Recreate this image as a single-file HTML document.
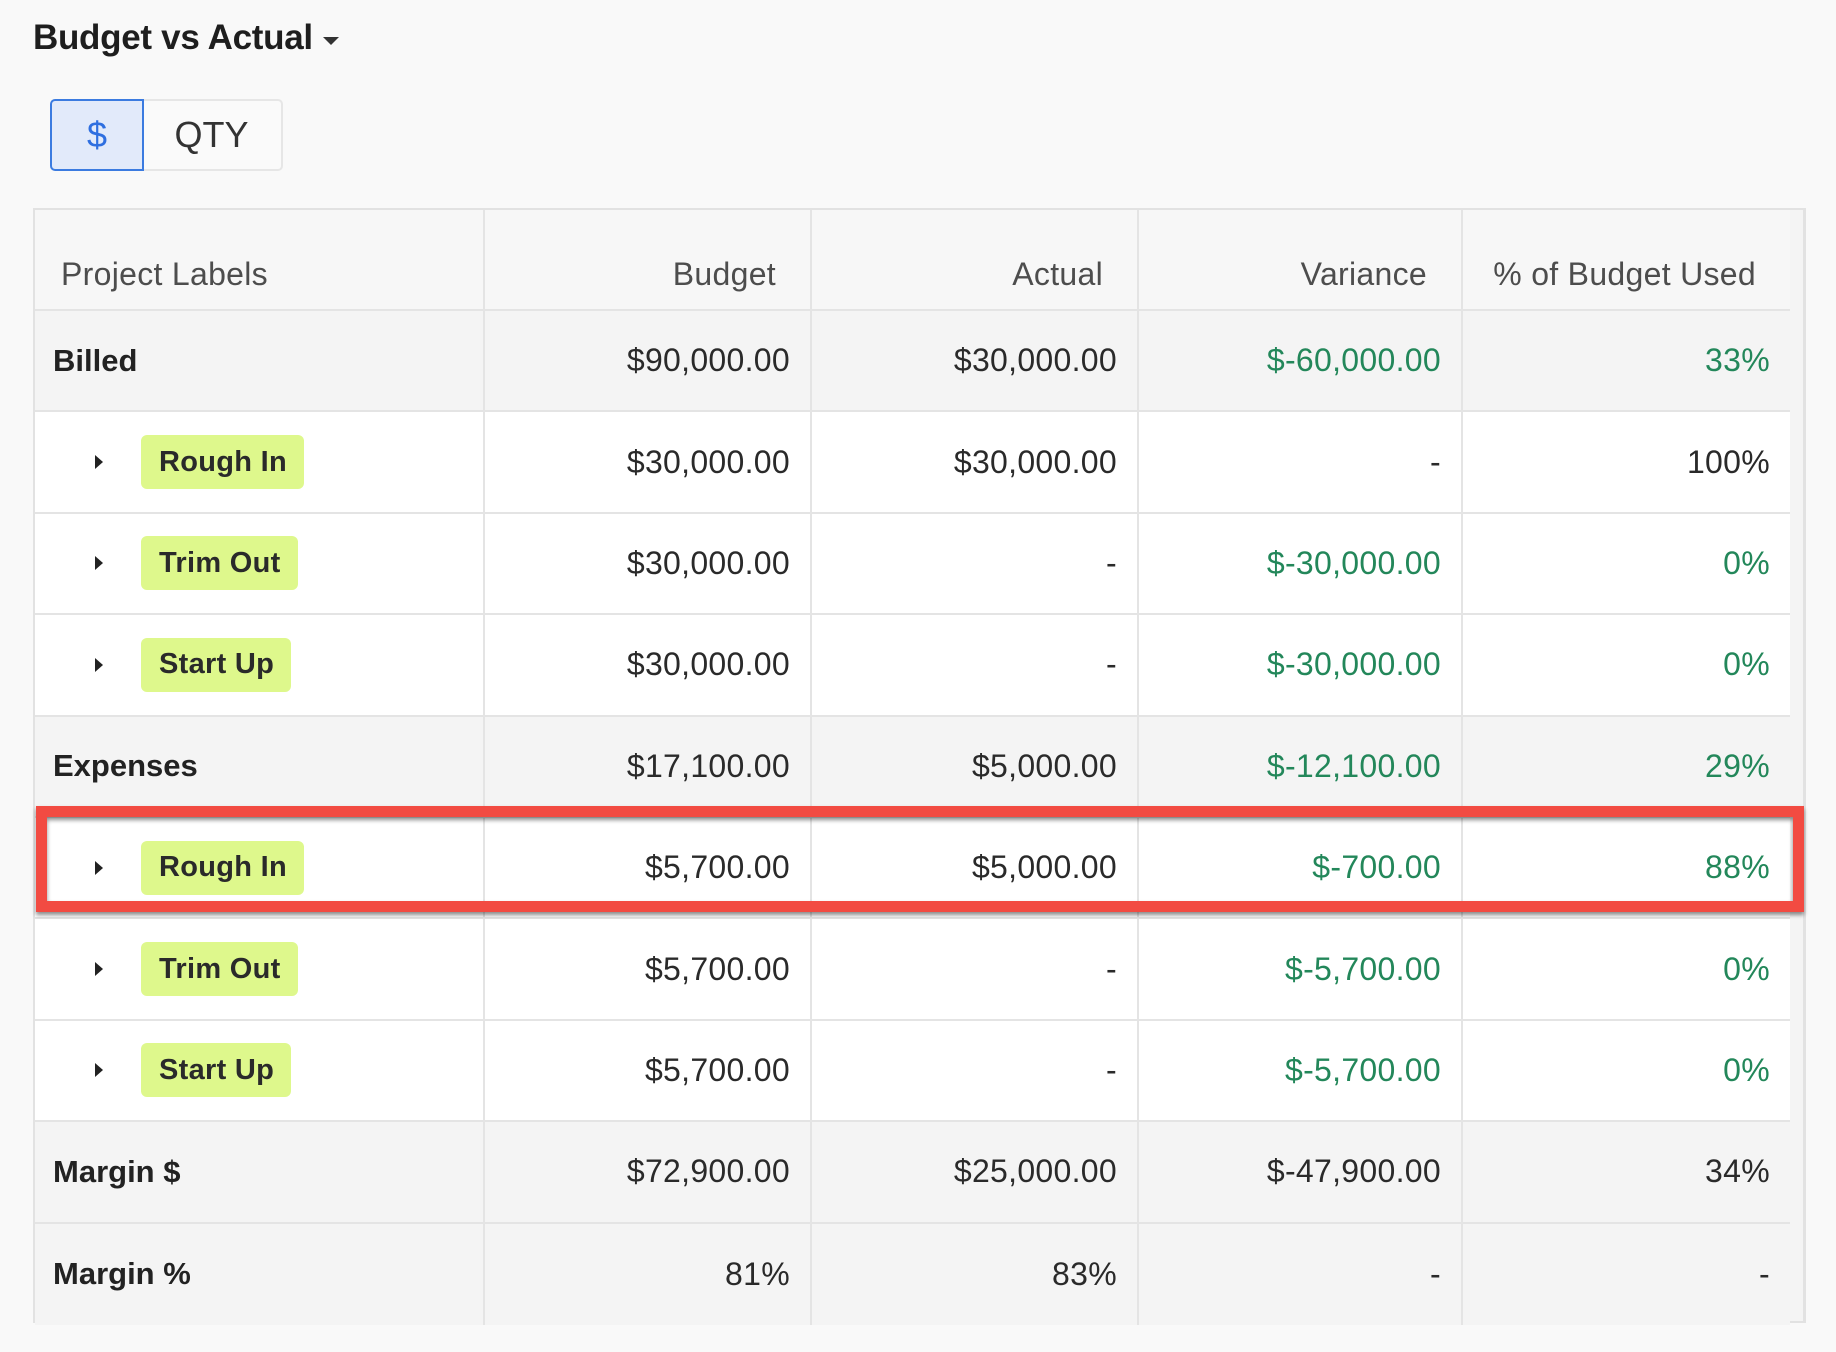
<!DOCTYPE html>
<html><head><meta charset="utf-8"><style>
*{box-sizing:border-box;margin:0;padding:0}
body{width:1836px;height:1352px;background:#f9f9f9;font-family:"Liberation Sans",sans-serif;position:relative;overflow:hidden;color:#2a2a2a}
.title{position:absolute;left:33px;top:18px;font-size:35px;font-weight:bold;color:#1e1e1e;letter-spacing:-0.3px}
.caret{position:absolute;left:323px;top:37px;width:0;height:0;border-left:8px solid transparent;border-right:8px solid transparent;border-top:8px solid #333}
.tg{position:absolute;top:99px;height:72px;display:flex;align-items:center;justify-content:center;font-size:36px}
.t1{left:50px;width:94px;background:#e2eafa;border:2px solid #3b7be0;border-radius:5px 0 0 5px;color:#2f6fe0;z-index:2}
.t2{left:142px;width:141px;background:#fafafa;border:2px solid #e6e6e6;border-left:none;border-radius:0 5px 5px 0;color:#333}
.tbl{position:absolute;left:33px;top:208px;width:1773px;height:1115px;background:#f4f4f4;border:2px solid #e2e2e2;border-right-width:3px}
.row{display:flex;width:1755px;border-bottom:2px solid #e4e4e4}
.row>div{height:100%;display:flex;align-items:center;justify-content:flex-end;padding-right:20px;border-right:2px solid #e4e4e4;font-size:32px;letter-spacing:0.3px}
.row>div:first-child{justify-content:flex-start;padding-left:18px;width:450px}
.row>div:nth-child(2),.row>div:nth-child(3),.row>div:nth-child(5){width:327px}
.row>div:nth-child(4){width:324px}
.row>div:last-child{border-right:none}
.hd{height:101px;background:#f7f7f7}
.hd>div{align-items:flex-end!important;padding-bottom:16px;color:#4d4d4d;padding-right:34px!important}
.hd>div:first-child{padding-left:26px!important}
.r{height:101.4px}
.g{background:#f4f4f4}
.c{background:#fff}
.b{font-weight:bold;font-size:31px!important;color:#222;letter-spacing:0!important}
.gr{color:#23875a}
.tri{width:0;height:0;border-top:7px solid transparent;border-bottom:7px solid transparent;border-left:8px solid #222;margin-left:42px;margin-right:38px}
.tag{background:#def88c;border-radius:6px;height:54px;padding:0 17px 0 18px;display:flex;align-items:center;font-weight:bold;font-size:29px;color:#2a2a2a}
.red{position:absolute;left:36px;top:806px;width:1768px;height:106px;border:11px solid #f24b42;box-shadow:0 3px 4px rgba(0,0,0,.45),inset 0 3px 4px rgba(0,0,0,.45)}
</style></head><body>
<div class="title">Budget vs Actual</div><div class="caret"></div>
<div class="tg t1">$</div><div class="tg t2">QTY</div>
<div class="tbl">
<div class="row hd"><div>Project Labels</div><div>Budget</div><div>Actual</div><div>Variance</div><div>% of Budget Used</div></div>
<div class="row r g"><div class="b">Billed</div><div>$90,000.00</div><div>$30,000.00</div><div class="gr">$-60,000.00</div><div class="gr">33%</div></div>
<div class="row r c"><div><span class="tri"></span><span class="tag">Rough In</span></div><div>$30,000.00</div><div>$30,000.00</div><div>-</div><div>100%</div></div>
<div class="row r c"><div><span class="tri"></span><span class="tag">Trim Out</span></div><div>$30,000.00</div><div>-</div><div class="gr">$-30,000.00</div><div class="gr">0%</div></div>
<div class="row r c"><div><span class="tri"></span><span class="tag">Start Up</span></div><div>$30,000.00</div><div>-</div><div class="gr">$-30,000.00</div><div class="gr">0%</div></div>
<div class="row r g"><div class="b">Expenses</div><div>$17,100.00</div><div>$5,000.00</div><div class="gr">$-12,100.00</div><div class="gr">29%</div></div>
<div class="row r c"><div><span class="tri"></span><span class="tag">Rough In</span></div><div>$5,700.00</div><div>$5,000.00</div><div class="gr">$-700.00</div><div class="gr">88%</div></div>
<div class="row r c"><div><span class="tri"></span><span class="tag">Trim Out</span></div><div>$5,700.00</div><div>-</div><div class="gr">$-5,700.00</div><div class="gr">0%</div></div>
<div class="row r c"><div><span class="tri"></span><span class="tag">Start Up</span></div><div>$5,700.00</div><div>-</div><div class="gr">$-5,700.00</div><div class="gr">0%</div></div>
<div class="row r g"><div class="b">Margin $</div><div>$72,900.00</div><div>$25,000.00</div><div>$-47,900.00</div><div>34%</div></div>
<div class="row r g" style="border-bottom:none"><div class="b">Margin %</div><div>81%</div><div>83%</div><div>-</div><div>-</div></div>
</div>
<div class="red"></div>
</body></html>
